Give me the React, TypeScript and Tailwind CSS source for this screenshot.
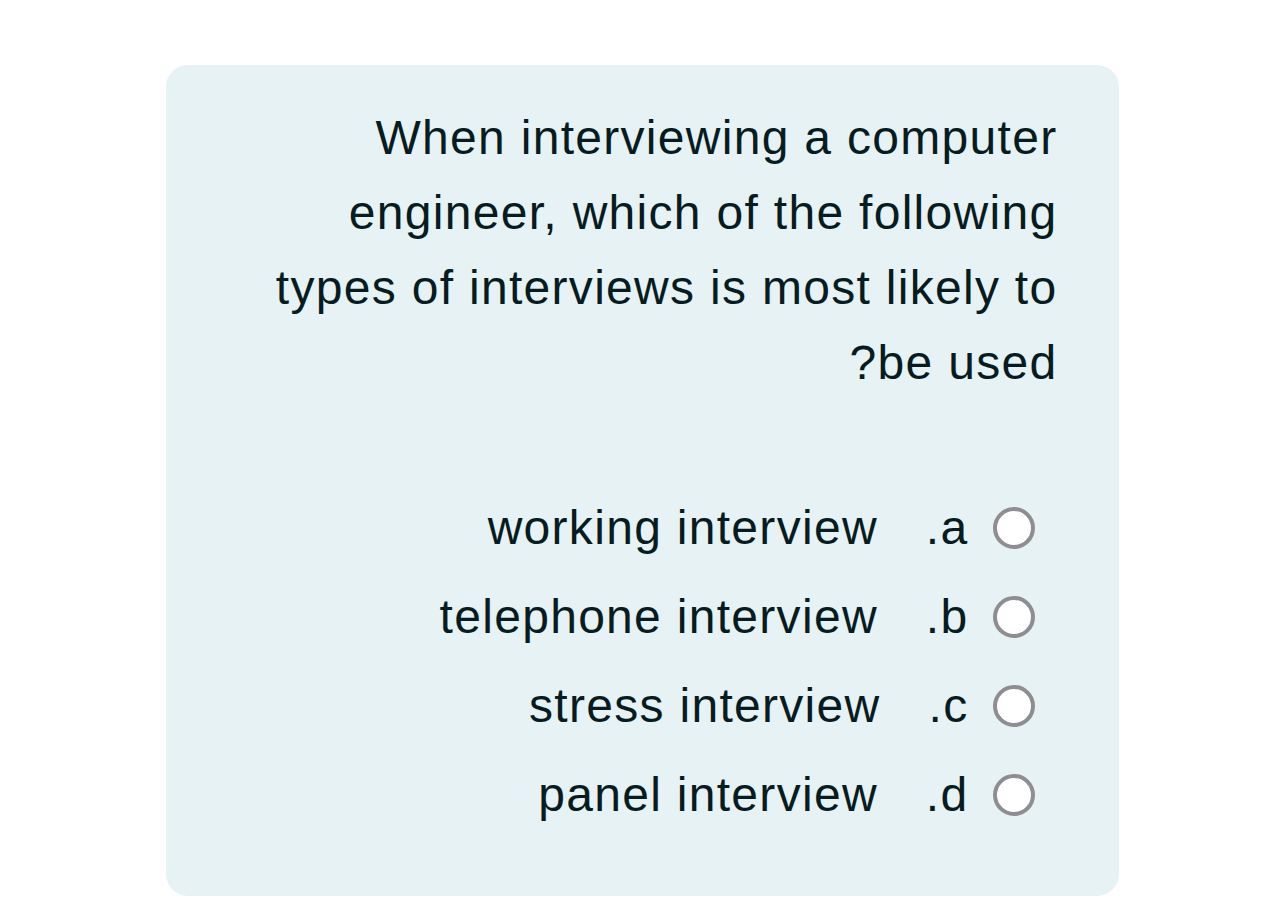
const OPTIONS = [
  { key: 'a.', label: 'working interview' },
  { key: 'b.', label: 'telephone interview' },
  { key: 'c.', label: 'stress interview' },
  { key: 'd.', label: 'panel interview' },
]

export default function App() {
  return (
    <div className="min-h-screen bg-white pt-[65px] font-['Liberation_Sans',Arial,sans-serif] text-[#061c21]">
      <div
        dir="rtl"
        className="mx-auto w-[953px] rounded-[22px] bg-[#e6f2f4] pr-[61px] pl-[90px] pt-[35px] pb-[57px]"
      >
        {/* Question */}
        <p className="text-[48px] leading-[75px] tracking-[1.3px]">
          When interviewing a computer engineer, which of the following types of interviews is most likely to be used?
        </p>

        {/* Answers */}
        <div className="mt-[83px] flex flex-col pr-[23px]">
          {OPTIONS.map((o) => (
            <label key={o.key} className="flex h-[89px] items-center text-[48px] leading-[56px] tracking-[1.3px]">
              <span className="block h-[42px] w-[42px] shrink-0 rounded-full border-[4px] border-[#8e8e92] bg-white" />
              <span className="mr-[24px]">{o.key}</span>
              <span className="mr-[48px]">{o.label}</span>
            </label>
          ))}
        </div>
      </div>
    </div>
  )
}
